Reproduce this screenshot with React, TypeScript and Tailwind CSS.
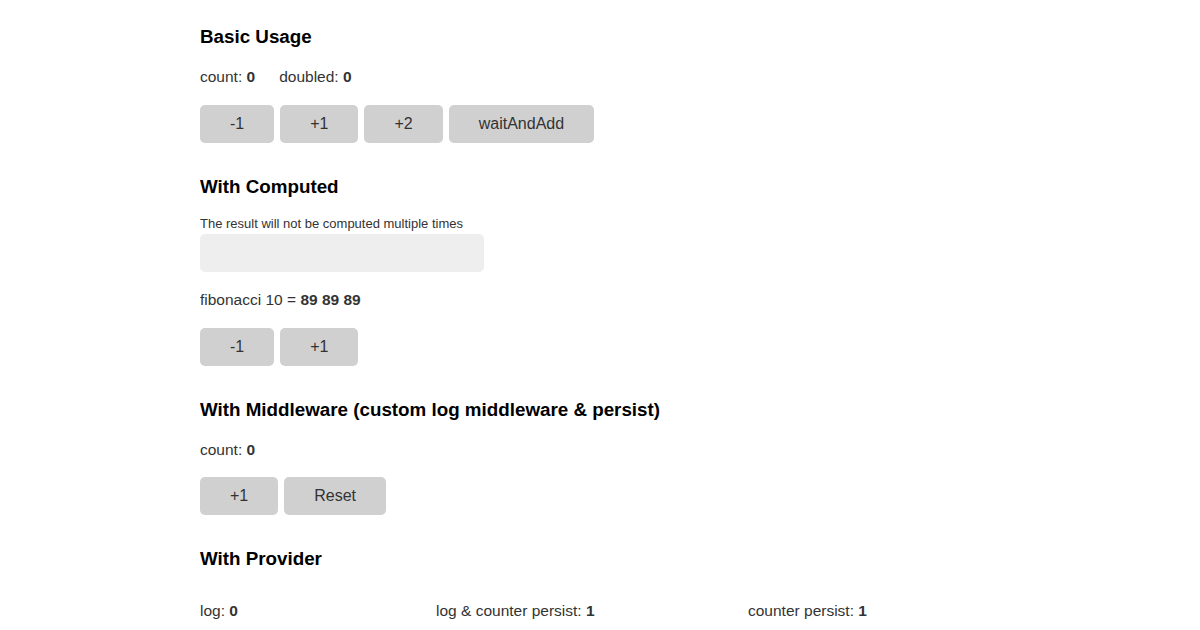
import React from "react";

const Btn = ({ children }: { children: React.ReactNode }) => (
  <button className="h-[38px] px-[30px] rounded-[5px] bg-[#d0d0d0] text-[16px] leading-[18px] text-[#333]">
    {children}
  </button>
);

const H = ({ children }: { children: React.ReactNode }) => (
  <h2 className="text-[18.8px] leading-[22px] font-bold text-black">{children}</h2>
);

export default function App() {
  return (
    <div
      className="w-[1200px] h-[630px] overflow-hidden bg-white text-[#333] text-[15.5px] leading-[18px]"
      style={{ fontFamily: '"Liberation Sans", Arial, sans-serif' }}
    >
      <div className="pl-[200px] pt-[26px] flex flex-col">
        <H>Basic Usage</H>
        <div className="mt-[20px] flex gap-[24px]">
          <span>
            count: <b>0</b>
          </span>
          <span>
            doubled: <b>0</b>
          </span>
        </div>
        <div className="mt-[19px] flex gap-[6px]">
          <Btn>-1</Btn>
          <Btn>+1</Btn>
          <Btn>+2</Btn>
          <Btn>waitAndAdd</Btn>
        </div>

        <div className="mt-[33px]">
          <H>With Computed</H>
        </div>
        <div className="mt-[18px] text-[13px] leading-[15px]">The result will not be computed multiple times</div>
        <div className="mt-[3px] w-[284px] h-[38px] rounded-[5px] bg-[#eeeeee]" />
        <div className="mt-[19px]">
          fibonacci 10 = <b>89 89 89</b>
        </div>
        <div className="mt-[19px] flex gap-[6px]">
          <Btn>-1</Btn>
          <Btn>+1</Btn>
        </div>

        <div className="mt-[33px]">
          <H>With Middleware (custom log middleware &amp; persist)</H>
        </div>
        <div className="mt-[20px]">
          count: <b>0</b>
        </div>
        <div className="mt-[18px] flex gap-[6px]">
          <Btn>+1</Btn>
          <Btn>Reset</Btn>
        </div>

        <div className="mt-[33px]">
          <H>With Provider</H>
        </div>
        <div className="mt-[32px] grid grid-cols-[236px_312px_auto]">
          <span>
            log: <b>0</b>
          </span>
          <span>
            log &amp; counter persist: <b>1</b>
          </span>
          <span>
            counter persist: <b>1</b>
          </span>
        </div>
      </div>
    </div>
  );
}
